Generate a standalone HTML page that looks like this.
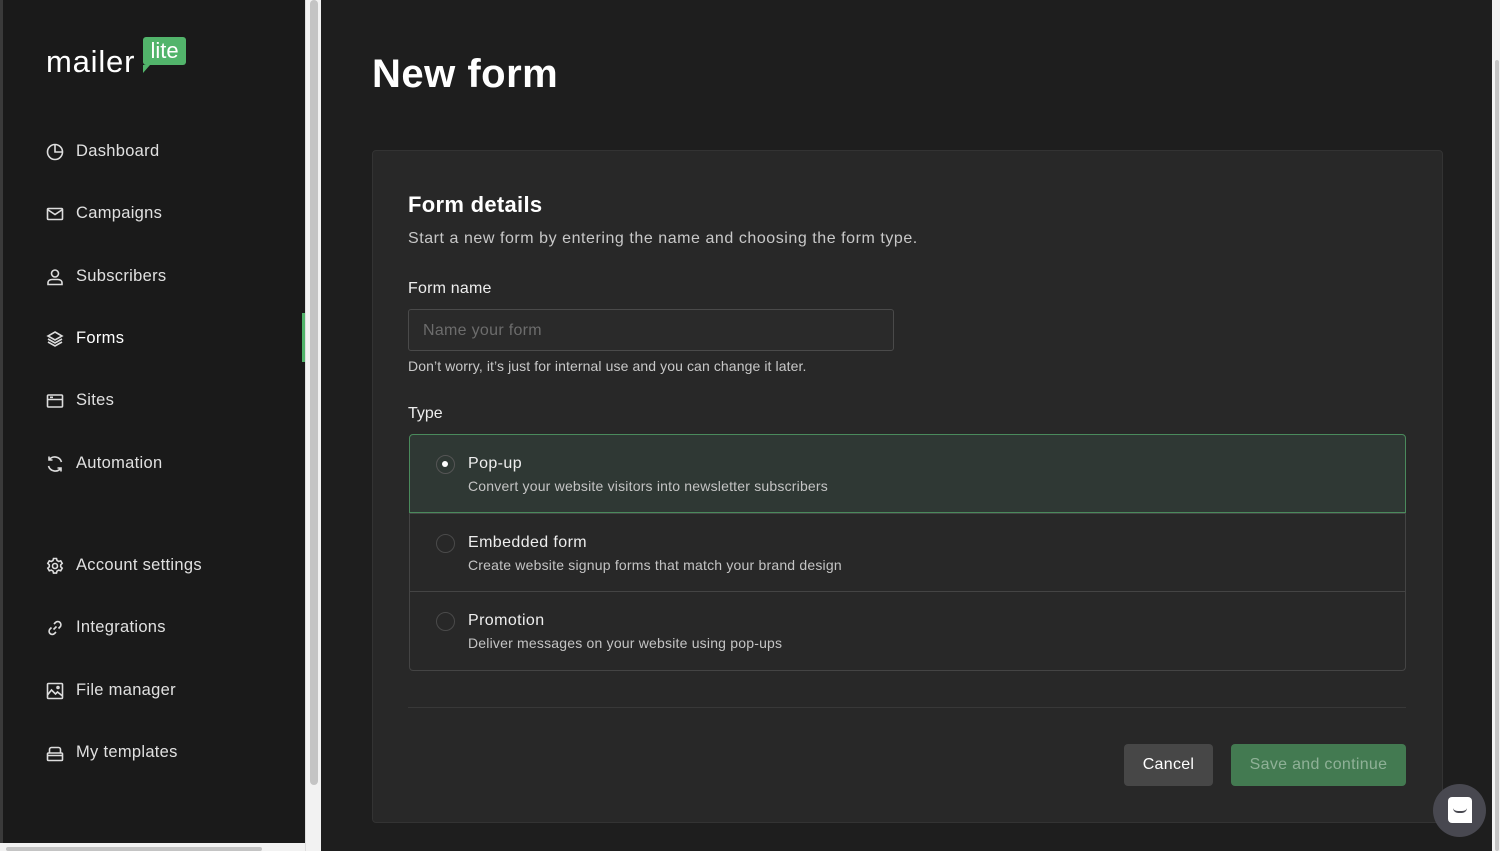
<!DOCTYPE html>
<html><head><meta charset="utf-8"><style>
*{box-sizing:border-box;margin:0;padding:0}
body{width:1500px;height:851px;overflow:hidden;background:#1e1e1e;font-family:"Liberation Sans",sans-serif;position:relative;color:#e6e6e6}
.side{position:absolute;left:0;top:0;width:305px;height:843px;background:#1a1a1a;border-left:3px solid #3a3a3a}
.gut{position:absolute;left:305px;top:0;width:16px;height:851px;background:#f2f2f2;border-left:1px solid #ddd}
.thumb{position:absolute;left:310px;top:0;width:8px;height:785px;background:#c4c4c4;border-radius:4px}
.hbar{position:absolute;left:0;top:843px;width:305px;height:8px;background:#f2f2f2}
.hthumb{position:absolute;left:6px;top:847px;width:256px;height:4px;background:#c4c4c4;border-radius:2px}
.logo{position:absolute;left:46px;top:44px;font-size:31px;color:#fff;letter-spacing:0.8px}
.lite{position:absolute;left:143px;top:37px;width:43px;height:28px;background:#52b46b;border-radius:3px;color:#fff;font-size:22px;text-align:center;line-height:28px}
.lite:after{content:"";position:absolute;left:0;bottom:-8px;border-left:7px solid #52b46b;border-bottom:8px solid transparent}
.nav{position:absolute;left:46px;font-size:16.5px;color:#e0e0e0;display:flex;align-items:center;letter-spacing:0.3px}
.nav svg{width:18px;height:18px;margin-right:12px;stroke:#ddd;fill:none;stroke-width:1.6}
.act{position:absolute;left:302px;top:313px;width:3px;height:49px;background:#52b46b}
.rs{position:absolute;left:1492px;top:0;width:8px;height:851px;background:#f2f2f2}
.rs div{position:absolute;left:3px;top:60px;width:4px;height:791px;background:#c4c4c4;border-radius:2px}
h1{position:absolute;left:372px;top:52px;font-size:40px;color:#fff;font-weight:bold;letter-spacing:0.5px}
.card{position:absolute;left:372px;top:150px;width:1071px;height:673px;background:#282828;border:1px solid #333;border-radius:4px}
.t{position:absolute;white-space:nowrap}
.inp{position:absolute;left:408px;top:309px;width:486px;height:42px;border:1px solid #4a4a4a;border-radius:3px;background:#2a2a2a;color:#6c6c6c;font-size:16px;padding:12px 14px;letter-spacing:0.3px}
.opt{position:absolute;left:409px;width:997px;height:79px;border:1px solid #444}
.radio{position:absolute;left:26px;top:20px;width:19px;height:19px;border:1.5px solid #4a4a4a;border-radius:50%}
.opt .a{position:absolute;left:58px;top:20px;font-size:16px;color:#eee;letter-spacing:0.4px}
.opt .b{position:absolute;left:58px;top:43px;font-size:14px;color:#c4c4c4;letter-spacing:0.2px}
.btn{position:absolute;top:744px;height:42px;border-radius:4px;font-size:16px;text-align:center;line-height:42px;letter-spacing:0.3px}
</style></head><body>
<div class="side"></div>
<div class="logo">mailer</div><div class="lite">lite</div>
<div class="nav" style="top:142px"><svg viewBox="0 0 18 18"><circle cx="9" cy="9" r="7.5"/><path d="M9 1.5V9h7.5"/></svg>Dashboard</div>
<div class="nav" style="top:204px"><svg viewBox="0 0 18 18"><rect x="1.5" y="3.5" width="15" height="11" rx="1"/><path d="M1.5 4.5l7.5 5 7.5-5"/></svg>Campaigns</div>
<div class="nav" style="top:267px"><svg viewBox="0 0 18 18"><circle cx="9" cy="5.5" r="3.5"/><path d="M2 16.5v-2c0-1.5 1.5-3 4-3h6c2.5 0 4 1.5 4 3v2z"/></svg>Subscribers</div>
<div class="nav" style="top:329px;color:#fff"><svg viewBox="0 0 18 18"><path d="M9 2l7 4-7 4-7-4z M2 9l7 4 7-4 M2 12l7 4 7-4"/></svg>Forms</div>
<div class="nav" style="top:391px"><svg viewBox="0 0 18 18"><rect x="1.5" y="3" width="15" height="12" rx="1"/><path d="M1.5 7.5h15M4 5.3h3"/></svg>Sites</div>
<div class="nav" style="top:454px"><svg viewBox="0 0 18 18"><path d="M15.5 7A7 7 0 0 0 3 5M2.5 11A7 7 0 0 0 15 13M3 1.5V5h3.5M15 16.5V13h-3.5"/></svg>Automation</div>
<div class="nav" style="top:556px"><svg viewBox="0 0 18 18"><circle cx="9" cy="9" r="2.5"/><path d="M7.5 1.5h3l.5 2 1.7 1 2-.7 1.5 2.6-1.5 1.4v2l1.5 1.4-1.5 2.6-2-.7-1.7 1-.5 2h-3l-.5-2-1.7-1-2 .7-1.5-2.6 1.5-1.4v-2L1.8 6.4l1.5-2.6 2 .7 1.7-1z"/></svg>Account settings</div>
<div class="nav" style="top:618px"><svg viewBox="0 0 18 18"><path d="M7.5 10.5l3-3M8 5l1.5-1.5a3 3 0 0 1 4.5 4.5L12.5 9.5M10 13l-1.5 1.5A3 3 0 0 1 4 10l1.5-1.5"/></svg>Integrations</div>
<div class="nav" style="top:681px"><svg viewBox="0 0 18 18"><rect x="1.5" y="1.5" width="15" height="15" rx="1"/><path d="M1.5 13l4-5 4 4 2-2 5 4"/><circle cx="12" cy="5.5" r="1"/></svg>File manager</div>
<div class="nav" style="top:743px"><svg viewBox="0 0 18 18"><rect x="1.5" y="9" width="15" height="7.5" rx="1"/><path d="M3.5 9V5.5a2 2 0 0 1 2-2h7a2 2 0 0 1 2 2V9M1.5 11.5h15"/></svg>My templates</div>
<div class="act"></div>
<div class="gut"></div><div class="thumb"></div>
<div class="hbar"></div><div class="hthumb"></div>
<div class="rs"><div></div></div>
<h1>New form</h1>
<div class="card"></div>
<div class="t" style="left:408px;top:192px;font-size:22px;color:#fff;font-weight:bold;letter-spacing:0.3px">Form details</div>
<div class="t" style="left:408px;top:230px;font-size:16px;color:#c8c8c8;letter-spacing:0.55px">Start a new form by entering the name and choosing the form type.</div>
<div class="t" style="left:408px;top:280px;font-size:16px;color:#eee;letter-spacing:0.2px">Form name</div>
<div class="inp">Name your form</div>
<div class="t" style="left:408px;top:358px;font-size:14px;color:#c8c8c8;letter-spacing:0.1px">Don’t worry, it’s just for internal use and you can change it later.</div>
<div class="t" style="left:408px;top:405px;font-size:16px;color:#eee">Type</div>
<div class="opt" style="top:434px;background:#2f3834;border:1px solid #4a8a5c;border-radius:4px 4px 0 0;z-index:2"><div class="radio" style="border-color:#555;background:#2f3834"><div style="position:absolute;left:5px;top:5px;width:6px;height:6px;border-radius:50%;background:#fff"></div></div><div class="a">Pop-up</div><div class="b">Convert your website visitors into newsletter subscribers</div></div>
<div class="opt" style="top:513px"><div class="radio"></div><div class="a">Embedded form</div><div class="b">Create website signup forms that match your brand design</div></div>
<div class="opt" style="top:592px;border-top:none;height:79px;border-radius:0 0 4px 4px"><div class="radio" style="top:20px"></div><div class="a" style="top:20px">Promotion</div><div class="b">Deliver messages on your website using pop-ups</div></div>
<div style="position:absolute;left:408px;top:707px;width:998px;height:1px;background:#383838"></div>
<div class="btn" style="left:1124px;width:89px;background:#474747;color:#fff">Cancel</div>
<div class="btn" style="left:1231px;width:175px;background:#437a51;color:#8fb197">Save and continue</div>
<div style="position:absolute;left:1433px;top:784px;width:53px;height:53px;border-radius:50%;background:#484850"></div>
<div style="position:absolute;left:1448px;top:797px;width:24px;height:26px;background:#fff;border-radius:4px 4px 0 4px"></div>
<div style="position:absolute;left:1453px;top:808px;width:14px;height:5px;border-bottom:2px solid #484850;border-radius:0 0 7px 7px"></div>
</body></html>
